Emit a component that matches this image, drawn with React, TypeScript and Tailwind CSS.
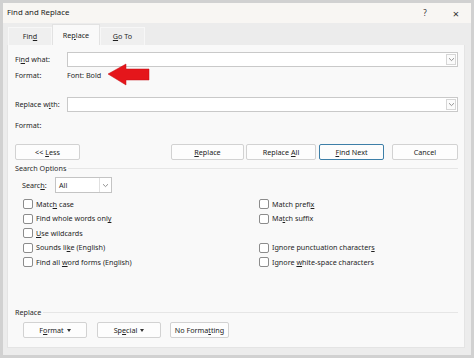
import type { ReactNode } from 'react'

const font = "font-['Segoe_UI','Noto_Sans',sans-serif]"

function U({ children }: { children: ReactNode }) {
  return <span className="underline underline-offset-[1px]">{children}</span>
}

function Chevron() {
  return (
    <svg width="7" height="5" viewBox="0 0 7 5" className="text-[#777]">
      <path d="M1 1.2 L3.5 3.6 L6 1.2" fill="none" stroke="currentColor" strokeWidth="0.8" />
    </svg>
  )
}

function ComboInput() {
  return (
    <div className="flex h-[15px] flex-1 items-center justify-end border border-[#c9c9c9] bg-white pr-[1px]">
      <div className="flex h-[11px] w-[10px] items-center justify-center border border-[#d6d6d6] bg-[#fbfbfb]">
        <Chevron />
      </div>
    </div>
  )
}

function Btn({ children, className = '', primary = false }: { children: ReactNode; className?: string; primary?: boolean }) {
  return (
    <div
      className={`flex h-[16px] items-center justify-center rounded-[2px] border bg-[#fdfdfd] text-[#222] ${
        primary ? 'border-[#3d7fa8]' : 'border-[#d2d2d2]'
      } ${className}`}
    >
      <span>{children}</span>
    </div>
  )
}

function Check({ children }: { children: ReactNode }) {
  return (
    <div className="flex h-[14.5px] items-center gap-[3px]">
      <div className="h-[10px] w-[10px] rounded-[2px] border border-[#8c8c8c] bg-white" />
      <span>{children}</span>
    </div>
  )
}

function Caret() {
  return <span className="ml-[3px] inline-block border-x-[2.5px] border-t-[3px] border-x-transparent border-t-[#333] align-middle" />
}

export default function App() {
  return (
    <div className={`h-[358px] w-[474px] bg-[#d1d1d1] p-[3px] text-[7.2px] text-[#1f1f1f] ${font}`}>
      <div className="flex h-full flex-col bg-[#ececec]">
        {/* title bar */}
        <div className="flex h-[20px] items-center bg-[#f8f6f3] pl-[4px] pr-[12px] text-[7.8px] text-[#1a1a1a]">
          <span>Find and Replace</span>
          <span className="ml-auto text-[8px] text-[#333]">?</span>
          <span className="ml-[26px] text-[11px] leading-none text-[#333]">×</span>
        </div>

        {/* tabs */}
        <div className="flex h-[22px] items-end px-[5px]">
          <div className="flex h-[18px] w-[44px] items-center justify-center border border-b-0 border-[#f7f7f7] bg-[#efefef]">
            <span>
              Fin<U>d</U>
            </span>
          </div>
          <div className="flex h-[21px] w-[48px] items-center justify-center border border-b-0 border-[#e2e2e2] bg-[#f9f9f9]">
            <span>
              Re<U>p</U>lace
            </span>
          </div>
          <div className="flex h-[18px] w-[45px] items-center justify-center border border-b-0 border-[#f7f7f7] bg-[#efefef]">
            <span>
              <U>G</U>o To
            </span>
          </div>
        </div>

        {/* panel */}
        <div className="relative mb-[7px] ml-[4px] mr-[6px] flex flex-1 flex-col border border-t-0 border-[#e4e4e4] bg-[#f9f9f9] pl-[7px] pr-[6px]">
          <div className="mt-[7px] flex items-center">
            <span className="w-[52px]">
              Fi<U>n</U>d what:
            </span>
            <ComboInput />
          </div>
          <div className="flex h-[16px] items-center">
            <span className="w-[52px]">Format:</span>
            <span>Font: Bold</span>
          </div>

          <div className="mt-[14px] flex items-center">
            <span className="w-[52px]">
              Replace w<U>i</U>th:
            </span>
            <ComboInput />
          </div>
          <div className="mt-[5px] flex h-[16px] items-center">
            <span>Format:</span>
          </div>

          <div className="mt-[11px] flex items-center">
            <Btn className="w-[65px]">
              &lt;&lt; <U>L</U>ess
            </Btn>
            <Btn className="ml-auto w-[73px]">
              <U>R</U>eplace
            </Btn>
            <Btn className="ml-[2px] w-[70px]">
              Replace <U>A</U>ll
            </Btn>
            <Btn primary className="ml-[3px] w-[65px]">
              <U>F</U>ind Next
            </Btn>
            <Btn className="ml-[8px] w-[66px]">Cancel</Btn>
          </div>

          <div className="mt-[1px] flex h-[14px] items-center">
            <span className="text-[#2a2a2a]">Search Options</span>
            <div className="ml-[2px] h-px flex-1 bg-[#e6e6e6]" />
          </div>

          <div className="mt-[2px] flex items-center pl-[7px]">
            <span className="w-[33px]">
              Searc<U>h</U>:
            </span>
            <div className="flex h-[16px] w-[57px] items-center border border-[#c4c4c4] bg-white">
              <span className="flex-1 pl-[3px]">All</span>
              <div className="flex h-full w-[12px] items-center justify-center border-l border-[#e0e0e0]">
                <Chevron />
              </div>
            </div>
          </div>

          <div className="mt-[4px] grid grid-cols-[236px_1fr] pl-[8px]">
            <div className="flex flex-col">
              <Check>
                Matc<U>h</U> case
              </Check>
              <Check>
                Find whole words onl<U>y</U>
              </Check>
              <Check>
                <U>U</U>se wildcards
              </Check>
              <Check>
                Sounds li<U>k</U>e (English)
              </Check>
              <Check>
                Find all <U>w</U>ord forms (English)
              </Check>
            </div>
            <div className="flex flex-col">
              <Check>
                Match prefi<U>x</U>
              </Check>
              <Check>
                Ma<U>t</U>ch suffix
              </Check>
              <div className="h-[14.5px]" />
              <Check>
                Ignore punctuation character<U>s</U>
              </Check>
              <Check>
                Ignore <U>w</U>hite-space characters
              </Check>
            </div>
          </div>

          <div className="mt-auto flex h-[14px] items-center">
            <span className="text-[#2a2a2a]">Replace</span>
            <div className="ml-[2px] h-px flex-1 bg-[#e6e6e6]" />
          </div>
          <div className="mb-[9px] mt-[3px] flex items-center pl-[8px]">
            <Btn className="w-[64px]">
              F<U>o</U>rmat
              <Caret />
            </Btn>
            <Btn className="ml-[10px] w-[64px]">
              Sp<U>e</U>cial
              <Caret />
            </Btn>
            <Btn className="ml-[9px] w-[59px]">
              No Forma<U>t</U>ting
            </Btn>
          </div>

          {/* red callout arrow */}
          <svg className="absolute left-[98px] top-[18px]" width="46" height="26" viewBox="0 0 46 26">
            <polygon points="2,11 20,1 20,6 43,6 43,17 20,17 20,22" fill="#e5161b" stroke="#c40f14" strokeWidth="0.5" />
          </svg>
        </div>
      </div>
    </div>
  )
}
